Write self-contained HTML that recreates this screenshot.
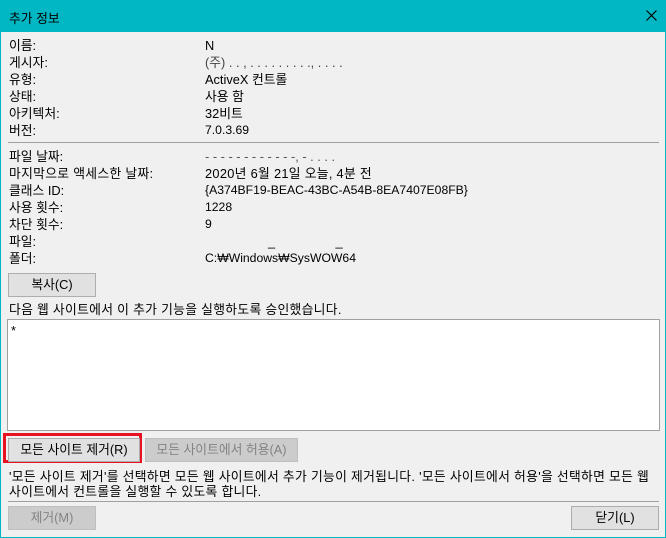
<!DOCTYPE html>
<html><head><meta charset="utf-8"><style>
*{margin:0;padding:0;box-sizing:border-box}
body{width:666px;height:538px;background:#00b7c3;position:relative;overflow:hidden;font-family:"Liberation Sans","Noto Sans CJK KR","NanumGothic",sans-serif;font-size:12.8px;color:#000}
#win{position:absolute;left:1px;top:32px;width:664px;height:505px;background:#f0f0f0}
.t{position:absolute;white-space:nowrap;line-height:17px}
.k{letter-spacing:0.3px}
.l{font-size:12.2px}
.title{position:absolute;left:9px;top:8px;font-size:12.8px;color:#000}
.hr{position:absolute;left:8px;width:651px;height:1px;background:#a0a0a0}
.btn{position:absolute;height:24px;border:1px solid #adadad;background:#e1e1e1;text-align:center;line-height:22px}
.dis{color:#838383;background:#cccccc;border-color:#bfbfbf}
</style></head><body>
<div class="title">추가 정보</div>
<svg style="position:absolute;left:646px;top:10px" width="11" height="11"><path d="M0.5 0.5L10.5 10.5M10.5 0.5L0.5 10.5" stroke="#000" stroke-width="1.2"/></svg>
<div id="win"></div>
<div class="t" style="left:9px;top:37px">이름:</div><div class="t" style="left:205px;top:37px">N</div>
<div class="t" style="left:9px;top:54px">게시자:</div><div class="t" style="left:205px;top:54px;color:#444">(주) . .  ,  . . . .   . . . . .,  . . . .</div>
<div class="t" style="left:9px;top:71px">유형:</div><div class="t" style="left:205px;top:71px">ActiveX 컨트롤</div>
<div class="t" style="left:9px;top:88px">상태:</div><div class="t" style="left:205px;top:88px">사용 함</div>
<div class="t" style="left:9px;top:105px">아키텍처:</div><div class="t" style="left:205px;top:105px">32비트</div>
<div class="t" style="left:9px;top:122px">버전:</div><div class="t l" style="left:205px;top:122px">7.0.3.69</div>
<div class="hr" style="top:142px"></div>
<div class="t" style="left:9px;top:148px">파일 날짜:</div><div class="t" style="left:205px;top:148px;color:#555">- - - -  - -  - - - -  - -,  -  . . . .</div>
<div class="t k" style="left:9px;top:165px">마지막으로 액세스한 날짜:</div><div class="t k" style="left:205px;top:165px">2020년 6월 21일 오늘, 4분 전</div>
<div class="t" style="left:9px;top:182px">클래스 ID:</div><div class="t l" style="left:205px;top:182px">{A374BF19-BEAC-43BC-A54B-8EA7407E08FB}</div>
<div class="t" style="left:9px;top:199px">사용 횟수:</div><div class="t l" style="left:205px;top:199px">1228</div>
<div class="t" style="left:9px;top:216px">차단 횟수:</div><div class="t l" style="left:205px;top:216px">9</div>
<div class="t" style="left:9px;top:233px">파일:</div><div class="t" style="left:268px;top:233px">_&nbsp;&nbsp;&nbsp;&nbsp;&nbsp;&nbsp;&nbsp;&nbsp;&nbsp;&nbsp;&nbsp;&nbsp;&nbsp;&nbsp;&nbsp;&nbsp;&nbsp;_</div>
<div class="t" style="left:9px;top:250px">폴더:</div><div class="t l" style="left:205px;top:250px">C:₩Windows₩SysWOW64</div>
<div class="btn" style="left:8px;top:273px;width:88px">복사(C)</div>
<div class="t k" style="left:9px;top:301px">다음 웹 사이트에서 이 추가 기능을 실행하도록 승인했습니다.</div>
<div style="position:absolute;left:7px;top:319px;width:653px;height:112px;background:#fff;border:1px solid #a0a0a0"></div>
<div class="t" style="left:11px;top:322px">*</div>
<div style="position:absolute;left:3px;top:433px;width:139px;height:30px;border:3px solid #e81123"></div>
<div class="btn" style="left:8px;top:438px;width:132px">모든 사이트 제거(R)</div>
<div class="btn dis" style="left:145px;top:438px;width:153px">모든 사이트에서 허용(A)</div>
<div class="t k" style="left:9px;top:468px">'모든 사이트 제거'를 선택하면 모든 웹 사이트에서 추가 기능이 제거됩니다. '모든 사이트에서 허용'을 선택하면 모든 웹</div>
<div class="t k" style="left:9px;top:483px">사이트에서 컨트롤을 실행할 수 있도록 합니다.</div>
<div class="hr" style="top:501px"></div>
<div class="btn dis" style="left:8px;top:506px;width:88px">제거(M)</div>
<div class="btn" style="left:571px;top:506px;width:88px">닫기(L)</div>
</body></html>
